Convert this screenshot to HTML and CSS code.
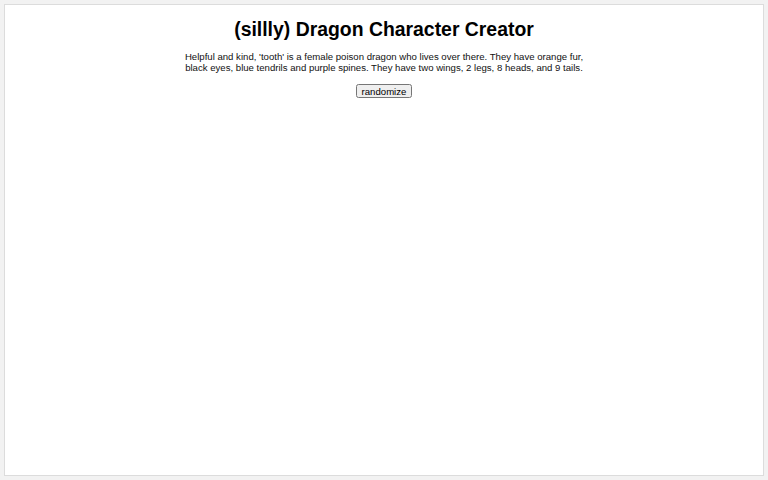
FILE: index.html
```html
<!DOCTYPE html>
<html lang="en">

<head>
    <meta charset="UTF-8">
    <meta name="viewport" content="width=device-width, initial-scale=1.0">
    <title>(sillly) Dragon Character Creator</title>
    <link rel="stylesheet" href="styles.css">
</head>

<body>
    <div class="page">
        <h1 class="title">(sillly) Dragon Character Creator</h1>
        <p class="description">Helpful and kind, 'tooth' is a female poison dragon who lives over there. They have orange fur, black eyes, blue tendrils and purple spines. They have two wings, 2 legs, 8 heads, and 9 tails.</p>
        <button class="randomize-btn">randomize</button>
    </div>
</body>

</html>
```

FILE: styles.css
```css
* {
    box-sizing: border-box;
}

html {
    background: #f2f2f2;
}

body {
    margin: 4px;
    font-family: 'Liberation Sans', Arial, sans-serif;
}

.page {
    height: 472px;
    background: #fff;
    border: 1px solid #dcdcdc;
    display: flex;
    flex-direction: column;
    align-items: center;
    padding-top: 13px;
}

.title {
    margin: 0;
    font-size: 19.4px;
    line-height: 22px;
    font-weight: bold;
    color: #000;
}

.description {
    max-width: 404px;
    margin: 11px 0 11px;
    font-size: 9.6px;
    line-height: 11px;
    text-align: center;
    color: #111;
}

.randomize-btn {
    height: 14px;
    font-family: 'Liberation Sans', Arial, sans-serif;
    font-size: 9.6px;
    line-height: 12px;
    padding: 0 4px;
    color: #000;
}
```
